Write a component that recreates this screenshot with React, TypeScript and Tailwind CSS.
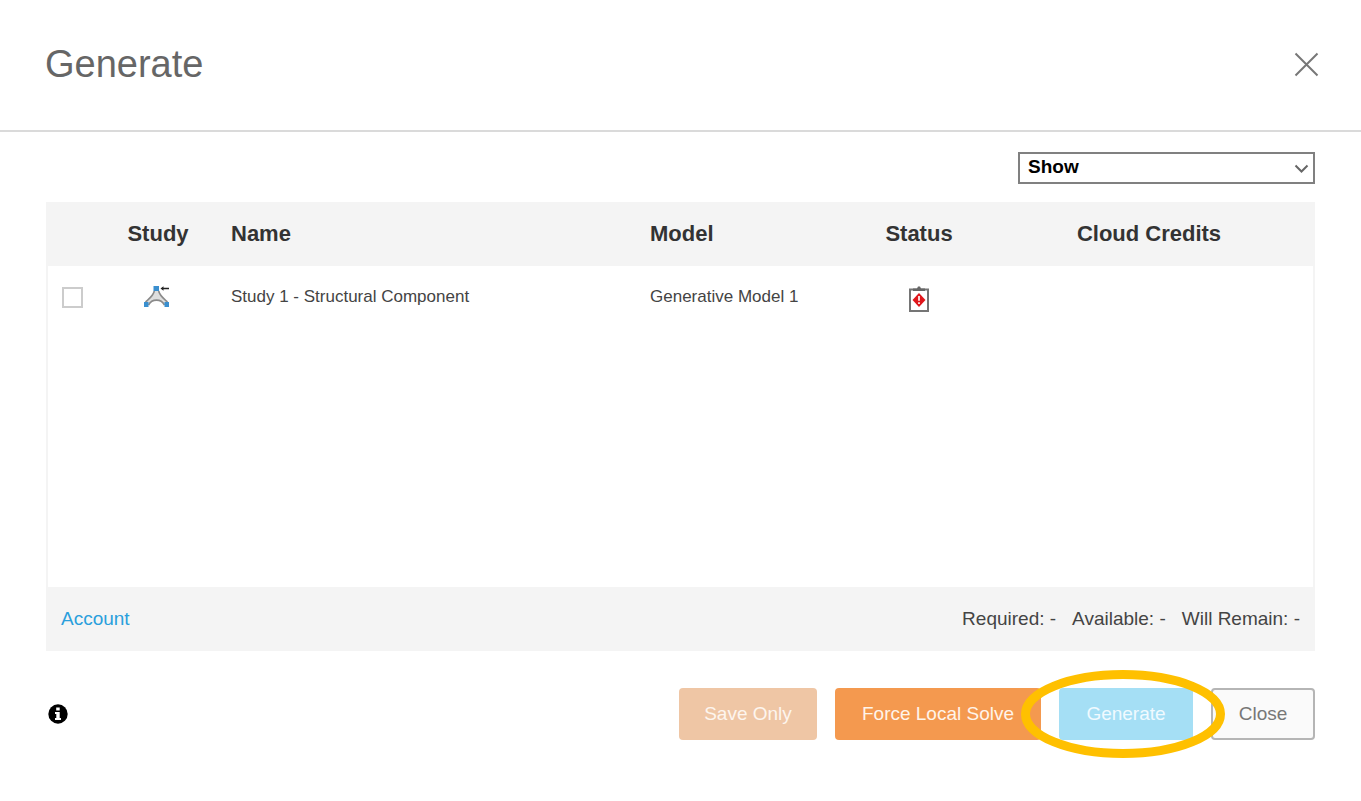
import React, { useState } from "react";

const studies = [
  {
    id: 1,
    name: "Study 1 - Structural Component",
    model: "Generative Model 1",
    credits: "",
  },
];

const totals = [
  { label: "Required:", value: "-" },
  { label: "Available:", value: "-" },
  { label: "Will Remain:", value: "-" },
];

const StudyIcon: React.FC = () => (
  <svg width="30" height="24" viewBox="0 0 30 24" fill="none" aria-hidden="true">
    <path
      d="M11 6C10.500 10.500 7 13 2.500 16.500L5.500 20.500C9 13.500 18 13.500 21.500 20.500L24.500 16.500C20 13 16.500 10.500 16 6Z"
      fill="#dedede"
    />
    <path
      d="M11.300 6C10.500 10.500 7 13 2.500 17M15.700 6C16.500 10.500 20 13 24.500 17M5.500 20C9 13.500 18 13.500 21.500 20"
      stroke="#8a8a8a"
      strokeWidth="1.600"
    />
    <rect x="10.500" y="1" width="5.500" height="5" fill="#3a8fcf" />
    <rect x="1" y="17" width="4.500" height="5" fill="#3a8fcf" />
    <rect x="21.500" y="17" width="4.500" height="5" fill="#3a8fcf" />
    <path d="M17.500 3.500L20.500 1.200V2.800H26V4.200H20.500V5.800Z" fill="#222" />
  </svg>
);

const StatusIcon: React.FC = () => (
  <svg width="20" height="26" viewBox="0 0 20 26" fill="none" role="img" aria-label="Not ready">
    <rect x="1" y="3.500" width="18" height="21.500" fill="#fff" stroke="#757575" strokeWidth="2" />
    <path d="M4 5V2.500H8L9 0.500H11L12 2.500H16V5Z" fill="#666" />
    <path d="M10 7L16.500 14L10 21L3.500 14Z" fill="#e0161b" />
    <path d="M10 10V14.800M10 16.200V18" stroke="#fbd5d5" strokeWidth="2" />
  </svg>
);

const App: React.FC = () => {
  const [selected, setSelected] = useState<number[]>([]);

  const toggleStudy = (id: number) => {
    setSelected(
      selected.includes(id)
        ? selected.filter((item) => item !== id)
        : [...selected, id]
    );
  };

  return (
    <div className="min-h-screen bg-white font-['Liberation_Sans',Arial,sans-serif] text-[#444]">
      <header className="flex items-center justify-between border-b-2 border-[#dadada] pt-[42px] pb-[43px] pl-[45px] pr-[42px]">
        <h1 className="text-[38px] leading-[45px] text-[#666]">Generate</h1>
        <button type="button" aria-label="Close dialog">
          <svg width="25" height="25" viewBox="0 0 25 25" fill="none">
            <path d="M1.500 1.500L23.500 23.500M23.500 1.500L1.500 23.500" stroke="#777" strokeWidth="2" />
          </svg>
        </button>
      </header>

      <main className="px-[46px] pt-5">
        <div className="flex justify-end">
          <div className="relative w-[297px]">
            <select
              aria-label="Show"
              className="block h-8 w-full appearance-none border-2 border-[#808080] bg-white pl-2 pb-[2px] text-[19px] leading-6 font-bold text-black"
            >
              <option>Show</option>
            </select>
            <svg
              className="pointer-events-none absolute top-3 right-[6px]"
              width="15"
              height="10"
              viewBox="0 0 15 10"
              fill="none"
            >
              <path d="M1.500 1.500L7.500 7.500L13.500 1.500" stroke="#666" strokeWidth="2" />
            </svg>
          </div>
        </div>

        {/* Studies Table */}
        <div className="mt-[18px] min-h-[385px] border-x-2 border-[#f4f4f4]">
          <table className="w-full table-fixed">
            <colgroup>
              <col className="w-[55px]" />
              <col className="w-[110px]" />
              <col />
              <col className="w-[221px]" />
              <col className="w-[132px]" />
              <col className="w-[328px]" />
            </colgroup>
            <thead className="bg-[#f4f4f4] text-[22px] leading-8 text-[#333]">
              <tr className="h-16">
                <th aria-label="Select"></th>
                <th>Study</th>
                <th className="pl-[18px] text-left">Name</th>
                <th className="pl-[18px] text-left">Model</th>
                <th>Status</th>
                <th>Cloud Credits</th>
              </tr>
            </thead>
            <tbody className="text-[17px] leading-6">
              {studies.map((study) => (
                <tr key={study.id} className="h-[62px]">
                  <td className="pl-[14px]">
                    <input
                      type="checkbox"
                      aria-label={study.name}
                      checked={selected.includes(study.id)}
                      onChange={() => toggleStudy(study.id)}
                      className="block size-[21px] appearance-none border-2 border-[#ccc] bg-white checked:bg-[#3a8fc9]"
                    />
                  </td>
                  <td>
                    <div className="flex justify-center">
                      <StudyIcon />
                    </div>
                  </td>
                  <td className="pl-[18px]">{study.name}</td>
                  <td className="pl-[18px]">{study.model}</td>
                  <td>
                    <div className="flex justify-center pt-1">
                      <StatusIcon />
                    </div>
                  </td>
                  <td className="text-center">{study.credits}</td>
                </tr>
              ))}
            </tbody>
          </table>
        </div>

        <div className="flex h-16 items-center justify-between bg-[#f4f4f4] px-[15px] text-[19px] leading-6">
          <a href="#account" className="text-[#2a9fdc]">
            Account
          </a>
          <div className="flex gap-4">
            {totals.map((total) => (
              <span key={total.label}>
                {total.label} {total.value}
              </span>
            ))}
          </div>
        </div>

        <div className="mt-[37px] flex items-center justify-between pb-14">
          <button type="button" aria-label="Information" className="ml-[2px]">
            <svg width="20" height="20" viewBox="0 0 20 20">
              <circle cx="10" cy="10" r="9.700" fill="#000" />
              <path
                d="M8.200 3.500H11.700V6.500H8.200ZM7 8H11.700V14H13V16H7V14H8.300V10H7Z"
                fill="#fff"
              />
            </svg>
          </button>
          <div className="flex gap-[18px] text-[19px] leading-6">
            <button
              type="button"
              className="h-[52px] w-[138px] rounded bg-[#efc6a5] text-[#fdf5ee]"
            >
              Save Only
            </button>
            <button
              type="button"
              className="h-[52px] w-[206px] rounded bg-[#f4994f] text-[#fff4ea]"
            >
              Force Local Solve
            </button>
            <div className="relative">
              <button
                type="button"
                className="h-[52px] w-[134px] rounded bg-[#a5dff5] text-[#f0faff]"
              >
                Generate
              </button>
              <svg
                className="pointer-events-none absolute -top-[18px] -left-[38px] z-10 max-w-none"
                width="204"
                height="88"
                viewBox="0 0 204 88"
                fill="none"
              >
                <ellipse cx="102" cy="44" rx="97.500" ry="39.500" stroke="#ffc000" strokeWidth="9" />
              </svg>
            </div>
            <button
              type="button"
              className="h-[52px] w-[104px] rounded border-2 border-[#b5b5b5] bg-[#fafafa] text-[#777]"
            >
              Close
            </button>
          </div>
        </div>
      </main>
    </div>
  );
};

export default App;
